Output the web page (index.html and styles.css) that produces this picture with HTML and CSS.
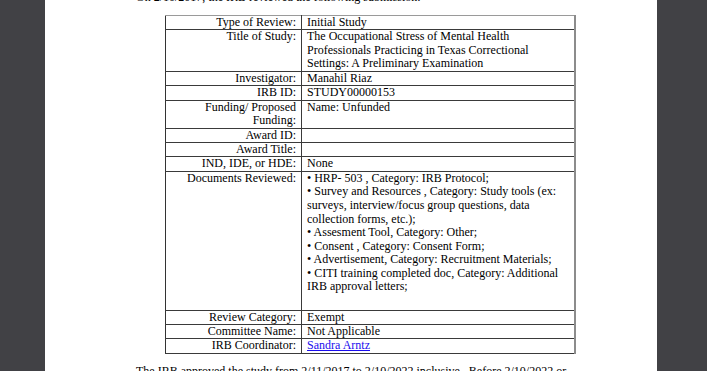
FILE: index.html
```html
<!DOCTYPE html>
<html>
<head>
<meta charset="utf-8">
<link rel="stylesheet" href="styles.css">
</head>
<body>
<div class="viewer">
  <div class="page">
    <p class="intro">On 2/10/2017, the IRB reviewed the following submission:</p>
    <table class="review">
      <tr><th>Type of Review:</th><td>Initial Study</td></tr>
      <tr class="multi"><th>Title of Study:</th><td>The Occupational Stress of Mental Health Professionals Practicing in Texas Correctional Settings: A Preliminary Examination</td></tr>
      <tr><th>Investigator:</th><td>Manahil Riaz</td></tr>
      <tr><th>IRB ID:</th><td>STUDY00000153</td></tr>
      <tr class="multi"><th>Funding/ Proposed Funding:</th><td>Name: Unfunded</td></tr>
      <tr><th>Award ID:</th><td></td></tr>
      <tr><th>Award Title:</th><td></td></tr>
      <tr><th>IND, IDE, or HDE:</th><td>None</td></tr>
      <tr><th>Documents Reviewed:</th><td class="docs">
        <div>• HRP- 503 , Category: IRB Protocol;</div>
        <div>• Survey and Resources , Category: Study tools (ex: surveys, interview/focus group questions, data collection forms, etc.);</div>
        <div>• Assesment Tool, Category: Other;</div>
        <div>• Consent , Category: Consent Form;</div>
        <div>• Advertisement, Category: Recruitment Materials;</div>
        <div>• CITI training completed doc, Category: Additional IRB approval letters;</div>
      </td></tr>
      <tr><th>Review Category:</th><td>Exempt</td></tr>
      <tr><th>Committee Name:</th><td>Not Applicable</td></tr>
      <tr><th>IRB Coordinator:</th><td><a class="link" href="#">Sandra Arntz</a></td></tr>
    </table>
    <p class="outro">The IRB approved the study from 2/11/2017 to 2/10/2022 inclusive.&nbsp; Before 2/10/2022 or</p>
  </div>
</div>
</body>
</html>
```

FILE: styles.css
```css
html, body {
  margin: 0;
  padding: 0;
  height: 371px;
  overflow: hidden;
}
body {
  background: #414145;
  font-family: "Liberation Serif", "Times New Roman", serif;
  font-size: 12px;
  line-height: 13.6px;
  color: #000;
}
.viewer {
  display: flex;
  height: 371px;
}
.page {
  margin-left: 45px;
  width: 612px;
  height: 371px;
  background: #fff;
  padding-left: 91px;
  box-sizing: border-box;
  overflow: hidden;
}
.intro {
  margin: -9px 0 0 0;
}
.review {
  margin: 10px 0 0 29px;
  border-collapse: collapse;
  width: 411px;
  table-layout: fixed;
  border-top: 1px solid #9a9a9a;
  border-right: 2px solid #8c8c8c;
  border-left: 1px solid #333;
  border-bottom: 1px solid #333;
}
.review th, .review td {
  border-top: 1px solid #3a3a3a;
  border-bottom: 1px solid #3a3a3a;
  padding: 0 5px;
  vertical-align: top;
  line-height: 13.3px;
  font-weight: normal;
}
.review tr.multi th, .review tr.multi td {
  line-height: 13.67px;
}
.review th {
  width: 125px;
  text-align: right;
  border-right: 1px solid #3a3a3a;
}
.review tr:first-child th, .review tr:first-child td {
  border-top: 1px solid #9a9a9a;
}
.review td {
  text-align: left;
}
.review td.docs {
  line-height: 13.6px;
  padding-bottom: 15.6px;
}
.link {
  color: #1a0dee;
  text-decoration: underline;
}
.outro {
  margin: 11px 0 0 0;
  white-space: nowrap;
}
```
